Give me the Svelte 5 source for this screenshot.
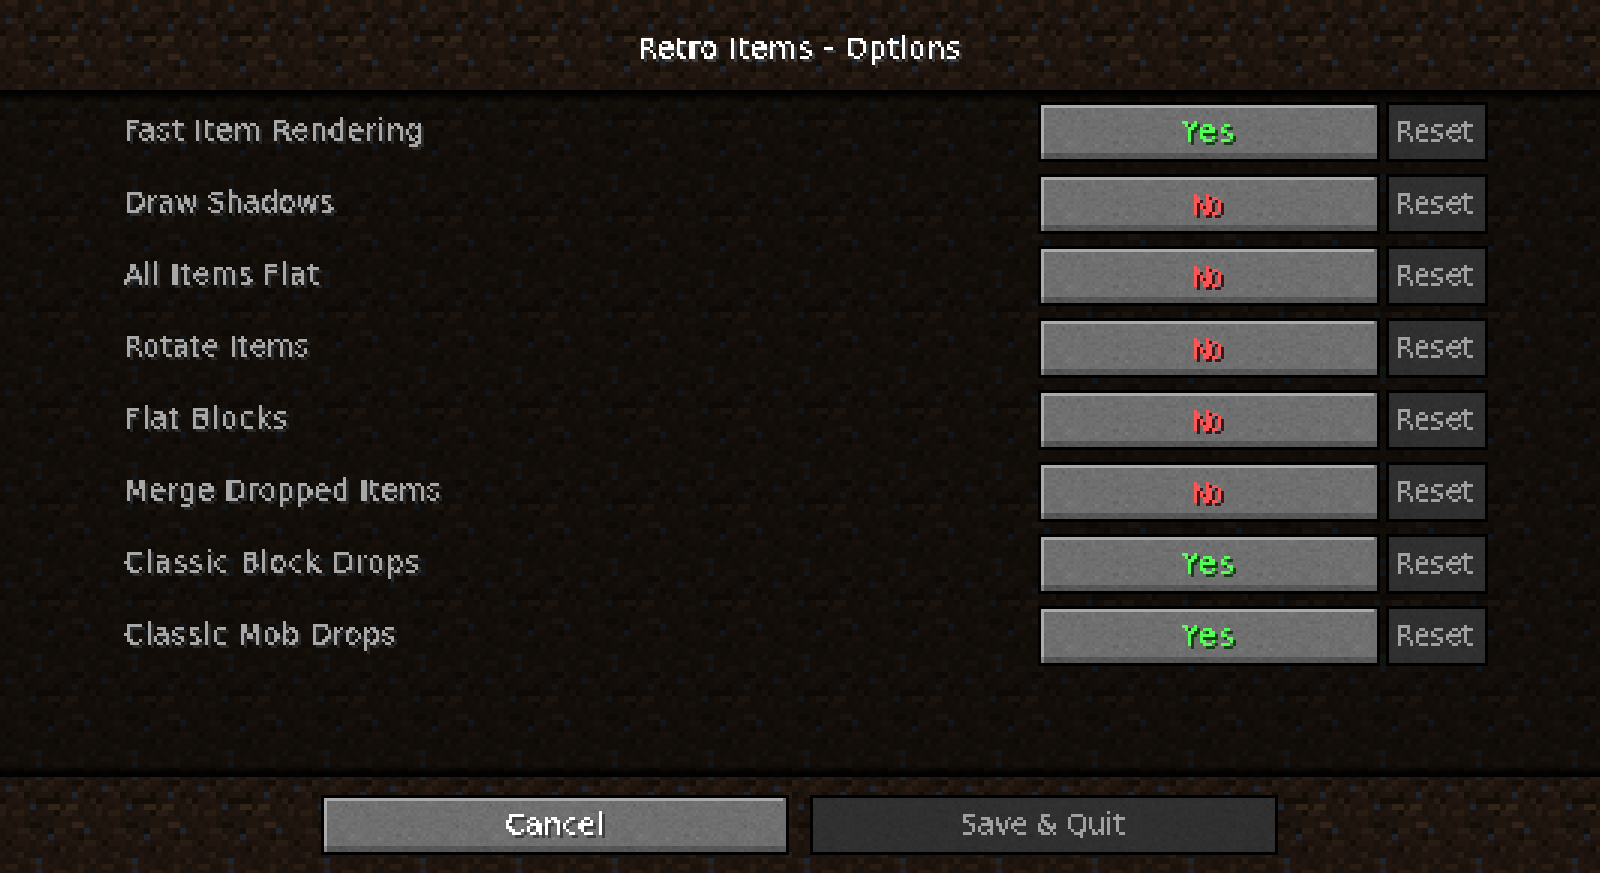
<script lang="ts">
  // dirt tile read off the reference, 16x16 cells at 6px. b = the blue specks
  const dirtRows = [
    "2331123222112321",
    "212112b213322311",
    "1210321232210032",
    "2b32212322121321",
    "112301222022b201",
    "0222120000112213",
    "32122b1244144121",
    "3133212220332122",
    "2122121112212212",
    "2212100212224421",
    "12233121033121b2",
    "12122312b2221021",
    "2022212321122233",
    "1211212110311322",
    "2123111211212222",
    "111223b212121213"
  ];
  const dirtColors: Record<string, string> = {
    "0": "#130d08",
    "1": "#1a120c",
    "2": "#20160f",
    "3": "#291c13",
    "4": "#312318",
    b: "#1b2631"
  };
  const dirtCells = dirtRows.flatMap((row, y) =>
    [...row].map((c, x) => ({ x: x * 6, y: y * 6, fill: dirtColors[c] }))
  );

  // fine noise for the stone buttons, 3px cells
  let seed = 4711;
  function rnd() {
    seed = (seed * 1103515245 + 12345) & 0x7fffffff;
    return seed / 0x7fffffff;
  }
  const stoneCells: { x: number; y: number; fill: string }[] = [];
  for (let y = 0; y < 18; y++) {
    for (let x = 0; x < 48; x++) {
      let v = 111 + (rnd() + rnd() - 1) * 7;
      if (rnd() > 0.96) v += rnd() > 0.5 ? 8 : -9;
      const g = Math.round(v);
      stoneCells.push({ x: x * 3, y: y * 3, fill: `rgb(${g},${g},${g})` });
    }
  }

  const options = [
    { name: "Fast Item Rendering", on: true },
    { name: "Draw Shadows", on: false },
    { name: "All Items Flat", on: false },
    { name: "Rotate Items", on: false },
    { name: "Flat Blocks", on: false },
    { name: "Merge Dropped Items", on: false },
    { name: "Classic Block Drops", on: true },
    { name: "Classic Mob Drops", on: true }
  ];

  // advance of the pixel font in its 3px units; everything not listed is 6
  const narrow: Record<string, number> = { i: 2, l: 3, t: 4, I: 4, f: 5, k: 5, " ": 4 };
  function unitWidth(text: string) {
    return [...text].reduce((sum, c) => sum + (narrow[c] ?? 6), 0);
  }

  // spreads or tightens the letters so a string takes the pixel font's width
  function fit(node: HTMLElement) {
    const text = node.textContent ?? "";
    node.style.letterSpacing = "0px";
    const natural = node.getBoundingClientRect().width;
    node.style.letterSpacing = (unitWidth(text) * 3 - natural) / text.length + "px";
  }
</script>

<svg class="defs" width="0" height="0" aria-hidden="true">
  <defs>
    <pattern id="dirt" width="96" height="96" patternUnits="userSpaceOnUse">
      {#each dirtCells as c}
        <rect x={c.x} y={c.y} width="6" height="6" fill={c.fill} />
      {/each}
    </pattern>
    <pattern id="dirt-list" href="#dirt" patternTransform="translate(0 84)"></pattern>
    <pattern id="stone" width="144" height="54" patternUnits="userSpaceOnUse">
      {#each stoneCells as c}
        <rect x={c.x} y={c.y} width="3" height="3" fill={c.fill} />
      {/each}
    </pattern>
    <linearGradient id="fade-down" x1="0" y1="0" x2="0" y2="1">
      <stop offset="0" stop-color="#000" />
      <stop offset="0.35" stop-color="#000" stop-opacity="0.8" />
      <stop offset="1" stop-color="#000" stop-opacity="0" />
    </linearGradient>
    <linearGradient id="fade-up" x1="0" y1="1" x2="0" y2="0">
      <stop offset="0" stop-color="#000" />
      <stop offset="0.35" stop-color="#000" stop-opacity="0.8" />
      <stop offset="1" stop-color="#000" stop-opacity="0" />
    </linearGradient>
    <!-- blocky 3px text: threshold the glyphs, sample one pixel per cell, grow it back -->
    <filter id="px" x="-5%" y="-20%" width="110%" height="140%" color-interpolation-filters="sRGB">
      <feComponentTransfer in="SourceGraphic" result="hard">
        <feFuncA type="discrete" tableValues="0 1 1 1" />
      </feComponentTransfer>
      <feFlood x="1" y="1" width="1" height="1" flood-color="#000" />
      <feComposite width="3" height="3" />
      <feTile result="grid" />
      <feComposite in="hard" in2="grid" operator="in" />
      <feMorphology operator="dilate" radius="1" />
    </filter>
  </defs>
</svg>

<svg class="backdrop" width="1600" height="873" aria-hidden="true">
  <rect width="1600" height="873" fill="url(#dirt)" />
  <rect y="90" width="1600" height="687" fill="url(#dirt-list)" />
  <rect y="90" width="1600" height="687" fill="#060604" opacity="0.5" />
  <rect y="90" width="1600" height="12" fill="url(#fade-down)" />
  <rect y="765" width="1600" height="12" fill="url(#fade-up)" />
</svg>

<div class="screen">
  <header class="title-bar">
    <h1 class="mc title" use:fit>Retro Items - Options</h1>
  </header>

  <main class="list">
    {#each options as opt}
      <div class="row">
        <span class="mc label" use:fit>{opt.name}</span>
        <button class="btn value">
          <svg class="tex" aria-hidden="true"><rect width="100%" height="100%" fill="url(#stone)" /></svg>
          <span class="mc {opt.on ? 'yes' : 'no'}" use:fit>{opt.on ? "Yes" : "No"}</span>
        </button>
        <button class="btn reset off" disabled>
          <svg class="tex" aria-hidden="true"><rect width="100%" height="100%" fill="url(#stone)" /></svg>
          <span class="mc" use:fit>Reset</span>
        </button>
      </div>
    {/each}
  </main>

  <footer class="actions">
    <button class="btn wide">
      <svg class="tex" aria-hidden="true"><rect width="100%" height="100%" fill="url(#stone)" /></svg>
      <span class="mc bright" use:fit>Cancel</span>
    </button>
    <button class="btn wide save off" disabled>
      <svg class="tex" aria-hidden="true"><rect width="100%" height="100%" fill="url(#stone)" /></svg>
      <span class="mc" use:fit>Save &amp; Quit</span>
    </button>
  </footer>
</div>

<style>
  :global(body) {
    margin: 0;
    background: #000;
    overflow: hidden;
  }
  .defs {
    position: absolute;
  }
  .backdrop {
    position: absolute;
    top: 0;
    left: 0;
    display: block;
  }
  .screen {
    position: relative;
    width: 1600px;
    height: 873px;
    display: flex;
    flex-direction: column;
  }
  .mc {
    display: block;
    font-family: "DejaVu Sans", sans-serif;
    font-size: 28px;
    font-weight: 400;
    line-height: 33px;
    white-space: pre;
    margin: 0;
    filter: url(#px);
  }
  .title-bar {
    height: 90px;
    flex: none;
    display: flex;
    align-items: center;
    justify-content: center;
  }
  .title {
    color: #fff;
    padding-top: 6px;
    filter: url(#px) drop-shadow(3px 3px 0 #3f3f3f);
  }
  .list {
    flex: 1;
    display: flex;
    flex-direction: column;
    gap: 12px;
    padding: 12px 112px 0 124px;
  }
  .row {
    height: 60px;
    display: flex;
    align-items: center;
  }
  .label {
    margin-right: auto;
    padding-bottom: 4px;
    color: #a8a8a8;
    filter: url(#px) drop-shadow(3px 3px 0 #2a2a2a);
  }
  .btn {
    position: relative;
    box-sizing: border-box;
    height: 60px;
    padding: 0;
    border: 3px solid #000;
    background: #000;
    display: flex;
    align-items: center;
    justify-content: center;
    overflow: hidden;
    color: #a0a0a0;
  }
  .btn::after {
    content: "";
    position: absolute;
    inset: 0;
    box-shadow:
      inset 0 -6px 0 rgba(0, 0, 0, 0.22),
      inset -3px 0 0 #6f6f6f,
      inset 3px 3px 0 #ababab;
  }
  .btn.off::after {
    display: none;
  }
  .tex {
    position: absolute;
    inset: 0;
    width: 100%;
    height: 100%;
  }
  .off .tex {
    opacity: 0.43;
  }
  .btn .mc {
    position: relative;
    z-index: 1;
    padding-bottom: 2px;
  }
  .value {
    width: 342px;
    margin-right: 6px;
  }
  .reset {
    width: 102px;
  }
  .reset .mc {
    padding-right: 6px;
  }
  .save .mc {
    padding-right: 4px;
  }
  .yes {
    color: #55ff55;
    filter: url(#px) drop-shadow(3px 3px 0 #153f15);
  }
  .btn .no {
    color: #ff5555;
    font-stretch: condensed;
    padding-right: 6px;
    padding-bottom: 0;
    filter: url(#px) drop-shadow(3px 3px 0 #3f1515);
  }
  .bright {
    color: #fff;
    filter: url(#px) drop-shadow(3px 3px 0 #3f3f3f);
  }
  .actions {
    height: 96px;
    flex: none;
    box-sizing: border-box;
    padding: 18px 0 0 321px;
    display: flex;
    align-items: flex-start;
    gap: 21px;
  }
  .wide {
    width: 468px;
  }
</style>
